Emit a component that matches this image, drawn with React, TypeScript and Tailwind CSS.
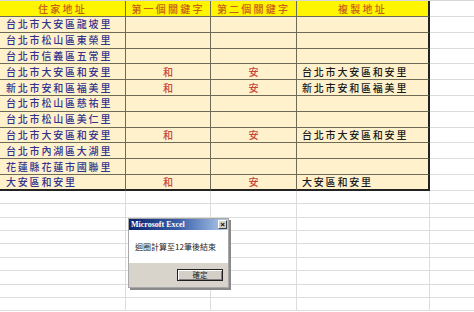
import React from "react";

const rows: [string, string, string, string][] = [
  ["台北市大安區龍坡里", "", "", ""],
  ["台北市松山區東榮里", "", "", ""],
  ["台北市信義區五常里", "", "", ""],
  ["台北市大安區和安里", "和", "安", "台北市大安區和安里"],
  ["新北市安和區福美里", "和", "安", "新北市安和區福美里"],
  ["台北市松山區慈祐里", "", "", ""],
  ["台北市松山區美仁里", "", "", ""],
  ["台北市大安區和安里", "和", "安", "台北市大安區和安里"],
  ["台北市內湖區大湖里", "", "", ""],
  ["花蓮縣花蓮市國聯里", "", "", ""],
  ["大安區和安里", "和", "安", "大安區和安里"],
];

const cols = "grid grid-cols-[126px_85px_86px_133px_1fr]";
const font = { fontFamily: '"Noto Sans CJK TC", "Noto Sans CJK SC", sans-serif' };

export default function App() {
  return (
    <div className="relative w-[474px] h-[312px] overflow-hidden bg-white" style={font}>
      {/* header */}
      <div className={`${cols} h-[17px] border-t border-[#d8d8d8]`}>
        {["住家地址", "第一個關鍵字", "第二個關鍵字", "複製地址"].map((h, i) => (
          <div
            key={h}
            className={`bg-[#fff500] flex items-center justify-center text-[10px] font-medium leading-none tracking-[2.2px] text-[#c8601a] border-b border-[#6e6a58] ${
              i === 3 ? "border-r-2 border-r-[#222]" : "border-r border-r-[#6e6a58]"
            }`}
          >
            {h}
          </div>
        ))}
        <div className="border-b border-[#dcdcdc]" />
      </div>
      {rows.map((r, ri) => {
        const last = ri === rows.length - 1;
        const bb = last ? "border-b-2 border-b-[#222]" : "border-b border-b-[#6e6a58]";
        return (
          <div key={ri} className={`${cols} h-[15.8px]`}>
            <div className={`bg-[#fef1cc] flex items-center pl-[6px] text-[10px] font-medium leading-none tracking-[1.8px] text-[#33338f] border-r border-r-[#6e6a58] ${bb}`}>
              {r[0]}
            </div>
            <div className={`bg-[#fef1cc] flex items-center justify-center text-[10px] font-medium leading-none text-[#c8463c] border-r border-r-[#6e6a58] ${bb}`}>
              {r[1]}
            </div>
            <div className={`bg-[#fef1cc] flex items-center justify-center text-[10px] font-medium leading-none text-[#c8463c] border-r border-r-[#6e6a58] ${bb}`}>
              {r[2]}
            </div>
            <div className={`bg-[#fef1cc] flex items-center pl-[5px] text-[10px] font-medium leading-none tracking-[1.8px] text-[#1a1a1a] border-r-2 border-r-[#222] ${bb}`}>
              {r[3]}
            </div>
            <div className="border-b border-[#dcdcdc]" />
          </div>
        );
      })}
      {Array.from({ length: 9 }).map((_, i) => (
        <div key={i} className={`${cols} h-[13.4px]`}>
          {[0, 1, 2, 3, 4].map((c) => (
            <div key={c} className={`border-b border-[#dcdcdc] ${c < 4 ? "border-r border-r-[#dcdcdc]" : ""}`} />
          ))}
        </div>
      ))}

      {/* dialog */}
      <div className="absolute left-[128px] top-[218px] w-[101px] h-[70px] flex flex-col border border-[#a8a8a8] shadow-[2px_2px_0_#8a8a8a] bg-white">
        <div className="h-[11px] flex items-center justify-between pl-[2px] pr-[1px] bg-gradient-to-r from-[#0c2470] via-[#3a5fa8] to-[#b8d0ee]">
          <span className="text-white text-[8px] font-bold leading-none" style={{ fontFamily: '"Liberation Serif", serif' }}>
            Microsoft Excel
          </span>
          <span className="w-[9px] h-[9px] bg-[#d4d0c8] border border-t-white border-l-white border-r-[#404040] border-b-[#404040] flex items-center justify-center text-[8px] font-bold leading-none text-black" style={{ fontFamily: '"Liberation Sans", sans-serif' }}>
            ×
          </span>
        </div>
        <div className="h-[33px] flex items-center pl-[6px] text-[8px] leading-none text-[#222]">
          迴圈計算至12筆後結束
        </div>
        <div className="flex-1 bg-[#d8d4cc] flex items-start justify-end pt-[6px] pr-[5px]">
          <div className="w-[46px] h-[12px] border border-[#202020] bg-[#d4d0c8] shadow-[inset_1px_1px_0_#ffffff,inset_-1px_-1px_0_#808080] flex items-center justify-center text-[7.5px] leading-none text-[#222]">
            確定
          </div>
        </div>
      </div>
    </div>
  );
}
